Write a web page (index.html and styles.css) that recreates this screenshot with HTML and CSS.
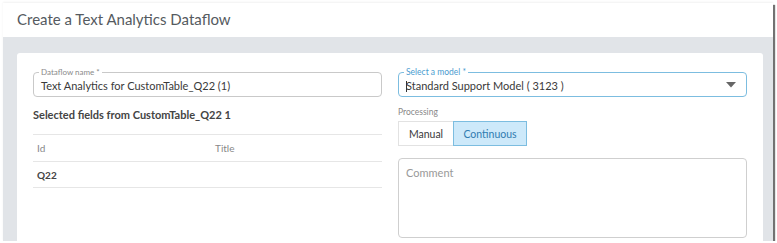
FILE: index.html
```html
<!DOCTYPE html>
<html>
<head>
<meta charset="utf-8">
<link rel="stylesheet" href="styles.css">
</head>
<body>
<div class="dialog">
  <div class="header">
    <h1 class="title">Create a Text Analytics Dataflow</h1>
  </div>
  <div class="body">
    <div class="card">
      <div class="col">
        <div class="field">
          <span class="legend">Dataflow name *</span>
          <span class="value">Text Analytics for CustomTable_Q22 (1)</span>
        </div>
        <div class="section-title">Selected fields from CustomTable_Q22 1</div>
        <div class="table">
          <div class="row head">
            <span class="c1">Id</span>
            <span class="c2">Title</span>
          </div>
          <div class="row">
            <span class="c1 strong">Q22</span>
            <span class="c2"></span>
          </div>
        </div>
      </div>
      <div class="col">
        <div class="field active">
          <span class="legend blue">Select a model *</span>
          <span class="value"><span class="caret"></span>Standard Support Model ( 3123 )</span>
          <svg class="arrow" width="10" height="6" viewBox="0 0 10 6"><path d="M0 0 L10 0 L5 5.5 Z" fill="#666"/></svg>
        </div>
        <div class="small-label">Processing</div>
        <div class="toggle">
          <span class="opt manual">Manual</span>
          <span class="opt on">Continuous</span>
        </div>
        <div class="textarea">Comment</div>
      </div>
    </div>
  </div>
</div>
</body>
</html>
```
FILE: styles.css
```css
html, body {
  margin: 0;
  padding: 0;
  background: #ffffff;
  font-family: Lato, "Open Sans", sans-serif;
}
.dialog {
  margin: 3px 0 0 3px;
  width: 770px;
  height: 238px;
  overflow: hidden;
  background: #ffffff;
  box-shadow: 2px 2px 1px rgba(0,0,0,0.55), 0 -1px 2px rgba(0,0,0,0.06);
  display: flex;
  flex-direction: column;
}
.header {
  height: 34px;
  display: flex;
  align-items: center;
  padding-left: 14px;
  flex: none;
}
.title {
  margin: 0;
  font-size: 15px;
  font-weight: 400;
  color: #555a60;
  position: relative;
  top: -1px;
}
.body {
  flex: 1;
  background: #e1e4e8;
  padding: 16px 10px 0 14px;
  display: flex;
}
.card {
  flex: 1;
  background: #ffffff;
  border-radius: 3px 3px 0 0;
  padding: 19px 16px 0 16px;
  display: flex;
  gap: 16px;
}
.col {
  width: 349px;
  display: flex;
  flex-direction: column;
}
.field {
  position: relative;
  height: 25px;
  box-sizing: border-box;
  border: 1px solid #c9c9c9;
  border-radius: 4px;
  display: flex;
  align-items: center;
  padding-left: 7px;
}
.field.active {
  border-color: #7cbde0;
}
.legend {
  position: absolute;
  left: 5px;
  top: -6px;
  font-size: 8px;
  line-height: 10px;
  color: #8a8a8a;
  background: #ffffff;
  padding: 0 2px;
}
.legend.blue {
  color: #4a9ccf;
  font-size: 8.5px;
}
.value {
  font-size: 11px;
  color: #3a3a3a;
  position: relative;
  top: 1px;
}
.caret {
  display: inline-block;
  width: 1px;
  height: 11px;
  background: #333;
  vertical-align: -2px;
  margin-right: -1px;
}
.arrow {
  position: absolute;
  right: 10px;
  top: 9px;
}
.section-title {
  margin-top: 11px;
  font-size: 11px;
  font-weight: 700;
  color: #444;
  height: 16px;
}
.table {
  margin-top: 10px;
  border-top: 1px solid #e6e6e6;
}
.row {
  display: flex;
  height: 25px;
  align-items: center;
  border-bottom: 1px solid #e6e6e6;
  font-size: 10px;
  color: #444;
}
.row.head {
  height: 26px;
  color: #888;
}
.c1 {
  width: 178px;
  padding-left: 4px;
}
.strong {
  font-weight: 700;
  color: #444;
}
.small-label {
  margin-top: 10px;
  font-size: 8.5px;
  color: #888;
  height: 14px;
}
.toggle {
  display: flex;
  height: 25px;
}
.opt {
  display: flex;
  align-items: center;
  justify-content: center;
  box-sizing: border-box;
  border: 1px solid #e2e2e2;
  font-size: 10.5px;
  color: #3a3a3a;
}
.opt.manual {
  width: 55px;
  border-right: none;
}
.opt.on {
  width: 74px;
  background: #cde9fa;
  border-color: #7cbde0;
  color: #2f7cb0;
}
.textarea {
  margin-top: 12px;
  height: 80px;
  box-sizing: border-box;
  border: 1px solid #cfcfcf;
  border-radius: 4px;
  padding: 7px 7px;
  font-size: 11px;
  color: #999;
}
```
